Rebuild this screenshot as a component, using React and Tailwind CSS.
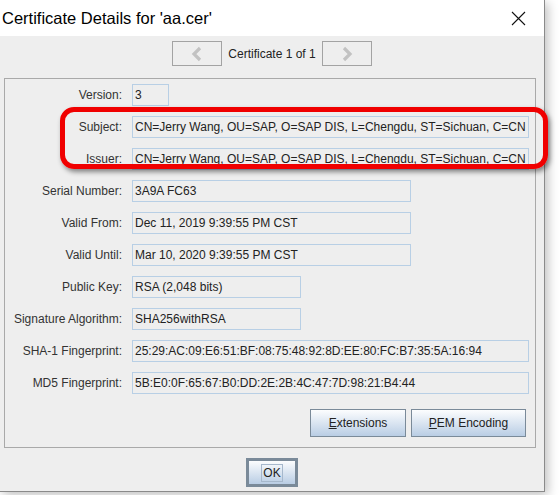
import React from 'react'

const fields = [
  { label: 'Version:', value: '3', width: 'w-[37px]' },
  { label: 'Subject:', value: 'CN=Jerry Wang, OU=SAP, O=SAP DIS, L=Chengdu, ST=Sichuan, C=CN', width: 'w-[402px]' },
  { label: 'Issuer:', value: 'CN=Jerry Wang, OU=SAP, O=SAP DIS, L=Chengdu, ST=Sichuan, C=CN', width: 'w-[402px]' },
  { label: 'Serial Number:', value: '3A9A FC63', width: 'w-[279px]' },
  { label: 'Valid From:', value: 'Dec 11, 2019 9:39:55 PM CST', width: 'w-[279px]' },
  { label: 'Valid Until:', value: 'Mar 10, 2020 9:39:55 PM CST', width: 'w-[279px]' },
  { label: 'Public Key:', value: 'RSA (2,048 bits)', width: 'w-[169px]' },
  { label: 'Signature Algorithm:', value: 'SHA256withRSA', width: 'w-[169px]' },
  { label: 'SHA-1 Fingerprint:', value: '25:29:AC:09:E6:51:BF:08:75:48:92:8D:EE:80:FC:B7:35:5A:16:94', width: 'w-[402px]' },
  { label: 'MD5 Fingerprint:', value: '5B:E0:0F:65:67:B0:DD:2E:2B:4C:47:7D:98:21:B4:44', width: 'w-[402px]' },
]

const Chevron = ({ dir }) => (
  <svg width="14" height="16" viewBox="0 0 14 16">
    <path
      d={dir === 'left' ? 'M10 2 L4 8 L10 14' : 'M4 2 L10 8 L4 14'}
      fill="none"
      stroke="#c2c2c2"
      strokeWidth="3.2"
    />
  </svg>
)

const NavButton = ({ dir }) => (
  <div className="flex h-[25px] w-[50px] items-center justify-center border border-[#a3a3a3] bg-[#eeeeee]">
    <Chevron dir={dir} />
  </div>
)

const SwingButton = ({ children, className = '' }) => (
  <div
    className={`flex h-[28px] items-center justify-center border border-[#7a8a99] bg-gradient-to-b from-[#fcfdfe] to-[#b9cde4] text-[12px] text-[#222] ${className}`}
  >
    {children}
  </div>
)

export default function App() {
  return (
    <div
      className="relative h-[495px] w-[560px] overflow-hidden bg-white"
      style={{ fontFamily: '"Liberation Sans", Arial, sans-serif' }}
    >
      <div className="flex h-[492px] w-[545px] flex-col border-r border-b border-[#8a8a8a] shadow-[3px_3px_10px_rgba(0,0,0,0.25)]">
        {/* title bar */}
        <div className="flex h-[36px] shrink-0 items-center justify-between bg-white pl-[2px] pr-[18px]">
          <span className="text-[16.5px] text-black">Certificate Details for 'aa.cer'</span>
          <svg width="15" height="15" viewBox="0 0 15 15">
            <path d="M1 1 L14 14 M14 1 L1 14" stroke="#111" strokeWidth="1.1" />
          </svg>
        </div>

        <div className="flex flex-1 flex-col bg-[#eeeeee]">
          {/* navigation */}
          <div className="mt-[5px] flex items-center justify-center gap-[6px]">
            <NavButton dir="left" />
            <span className="text-[12px] text-[#222]">Certificate 1 of 1</span>
            <NavButton dir="right" />
          </div>

          {/* details panel */}
          <div className="mt-[12px] ml-[4px] mr-[8px] flex h-[370px] flex-col border border-[#a9a9a9] px-[6px] pt-[5px]">
            <div className="flex flex-col gap-[10px]">
              {fields.map((f) => (
                <div key={f.label} className="flex items-center">
                  <span className="w-[121px] shrink-0 whitespace-nowrap pr-[10px] text-right text-[12px] text-[#333]">
                    {f.label}
                  </span>
                  <div
                    className={`flex h-[22px] items-center whitespace-nowrap border border-[#b8cfe5] bg-[#eeeeee] pl-[2px] text-[12px] text-[#222] ${f.width}`}
                  >
                    {f.value}
                  </div>
                </div>
              ))}
            </div>
            <div className="mt-[15px] flex justify-end gap-[5px] pr-[3px]">
              <SwingButton className="w-[96px]">
                <span>
                  <span className="underline">E</span>xtensions
                </span>
              </SwingButton>
              <SwingButton className="w-[115px]">
                <span>
                  <span className="underline">P</span>EM Encoding
                </span>
              </SwingButton>
            </div>
          </div>

          {/* OK */}
          <div className="mt-[10px] flex justify-center">
            <div className="flex h-[29px] w-[52px] items-center justify-center border-[3px] border-[#7a8a99] bg-gradient-to-b from-[#fcfdfe] to-[#b9cde4]">
              <span className="border border-[#a6b8cc] px-[1px] text-[12px] leading-[16px] text-[#222]">OK</span>
            </div>
          </div>
        </div>
      </div>

      {/* red annotation */}
      <div className="absolute left-[60px] top-[107px] h-[62px] w-[488px] rounded-[14px] border-[5px] border-[#f00000] shadow-[2px_3px_5px_rgba(0,0,0,0.45)]" />
    </div>
  )
}
